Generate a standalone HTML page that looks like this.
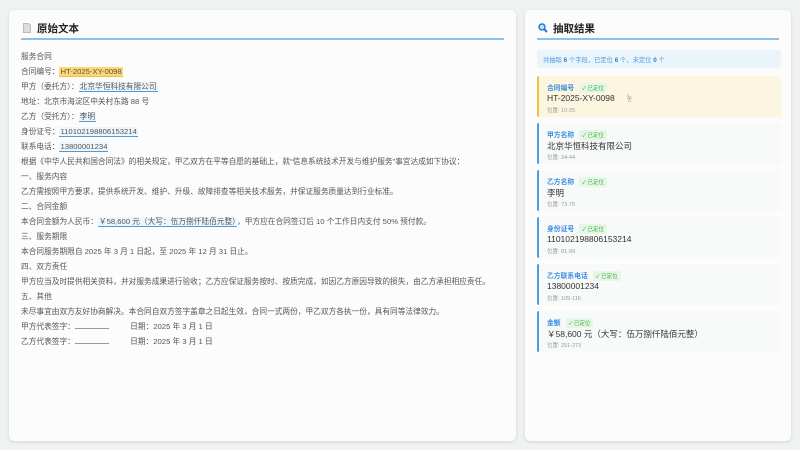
<!DOCTYPE html>
<html><head><meta charset="utf-8"><style>
*{margin:0;padding:0;box-sizing:border-box}
body{width:800px;height:450px;background:#eff2f2;font-family:"Liberation Sans","Noto Sans CJK SC",sans-serif;position:relative;overflow:hidden;color:#444}
.panel{position:absolute;top:10px;height:431px;background:#fcfcfc;border-radius:5px;box-shadow:0 1px 3px rgba(0,0,0,.12)}
#L{left:9px;width:507px}
#R{left:525px;width:266px}
.hd{position:absolute;left:12px;right:12px;top:10px;height:20px;border-bottom:2px solid #8cc0ee;font-weight:bold;font-size:10.5px;color:#222}
.hd span{position:absolute;left:16px;top:1px}
.line{position:absolute;left:12px;font-size:7.7px;color:#555;white-space:nowrap;line-height:10px}
.hl{border-bottom:1.5px solid #f0c040;padding:0 1px;background:#fdd872}
.bl{background:#eef6fd;border-bottom:1.5px solid #4a9be0;padding:0 1px}
.sum{position:absolute;left:12px;right:10px;top:40px;height:18px;background:#eaf5fb;border-radius:3px;font-size:6.3px;color:#4a9be0;padding:5px 6px}
.sum b{color:#2a7acc}
.card{position:absolute;left:12px;width:244px;height:41px;background:#f8fafa;border-left:2.5px solid #4a9be0;border-radius:2px}
.card .t{position:absolute;left:8px;top:6px;font-size:6.8px;font-weight:bold;color:#3a8de0}
.card .ok{display:inline-block;margin-left:5px;background:#e6f6e6;color:#3cb03c;font-weight:normal;font-size:5.5px;padding:1px 3px;border-radius:2px}
.card .v{position:absolute;left:8px;top:17px;font-size:8.5px;color:#333}
.card .p{position:absolute;left:8px;top:30px;font-size:5.5px;color:#999}
</style></head><body>
<div class="panel" id="L">
<div class="hd"><svg style="position:absolute;left:2px;top:3px" width="8" height="10"><path d="M0.5 0.5h5l2 2v7h-7z" fill="#ddd" stroke="#bbb"/></svg><span>原始文本</span></div>
<div class="line" style="top:42px">服务合同</div>
<div class="line" style="top:57px">合同编号：<span class="hl">HT-2025-XY-0098</span></div>
<div class="line" style="top:72px">甲方（委托方）：<span class="bl">北京华恒科技有限公司</span></div>
<div class="line" style="top:87px">地址：北京市海淀区中关村东路 88 号</div>
<div class="line" style="top:102px">乙方（受托方）：<span class="bl">李明</span></div>
<div class="line" style="top:117px">身份证号：<span class="bl">110102198806153214</span></div>
<div class="line" style="top:132px">联系电话：<span class="bl">13800001234</span></div>
<div class="line" style="top:147px">根据《中华人民共和国合同法》的相关规定，甲乙双方在平等自愿的基础上，就“信息系统技术开发与维护服务”事宜达成如下协议：</div>
<div class="line" style="top:162px">一、服务内容</div>
<div class="line" style="top:177px">乙方需按照甲方要求，提供系统开发、维护、升级、故障排查等相关技术服务，并保证服务质量达到行业标准。</div>
<div class="line" style="top:192px">二、合同金额</div>
<div class="line" style="top:207px">本合同金额为人民币：<span class="bl">￥58,600 元（大写：伍万捌仟陆佰元整）</span>，甲方应在合同签订后 10 个工作日内支付 50% 预付款。</div>
<div class="line" style="top:222px">三、服务期限</div>
<div class="line" style="top:237px">本合同服务期限自 2025 年 3 月 1 日起，至 2025 年 12 月 31 日止。</div>
<div class="line" style="top:252px">四、双方责任</div>
<div class="line" style="top:267px">甲方应当及时提供相关资料，并对服务成果进行验收；乙方应保证服务按时、按质完成，如因乙方原因导致的损失，由乙方承担相应责任。</div>
<div class="line" style="top:282px">五、其他</div>
<div class="line" style="top:297px">未尽事宜由双方友好协商解决。本合同自双方签字盖章之日起生效，合同一式两份，甲乙双方各执一份，具有同等法律效力。</div>
<div class="line" style="top:312px">甲方代表签字：<span style="display:inline-block;width:34px;border-bottom:1px solid #999"></span>&nbsp;&nbsp;&nbsp;&nbsp;&nbsp;&nbsp;&nbsp;&nbsp;&nbsp;&nbsp;日期：2025 年 3 月 1 日</div>
<div class="line" style="top:327px">乙方代表签字：<span style="display:inline-block;width:34px;border-bottom:1px solid #999"></span>&nbsp;&nbsp;&nbsp;&nbsp;&nbsp;&nbsp;&nbsp;&nbsp;&nbsp;&nbsp;日期：2025 年 3 月 1 日</div>
</div>
<div class="panel" id="R">
<div class="hd"><svg style="position:absolute;left:1px;top:3px" width="10" height="10"><circle cx="4" cy="4" r="3" fill="#bfe0f5" stroke="#2a7acc" stroke-width="1.5"/><path d="M6 6l3 3" stroke="#2a7acc" stroke-width="2"/></svg><span>抽取结果</span></div>
<div class="sum">共抽取 <b>6</b> 个字段，已定位 <b>6</b> 个，未定位 <b>0</b> 个</div>
<div class="card" style="top:66px;background:#fcf5e0;border-left-color:#f0c040"><div class="t">合同编号<span class="ok">✓ 已定位</span></div><div class="v">HT-2025-XY-0098 <span style="margin-left:8px;color:#888;font-size:8px">☝</span></div><div class="p">位置: 10-25</div></div>
<div class="card" style="top:113px"><div class="t">甲方名称<span class="ok">✓ 已定位</span></div><div class="v">北京华恒科技有限公司</div><div class="p">位置: 34-44</div></div>
<div class="card" style="top:160px"><div class="t">乙方名称<span class="ok">✓ 已定位</span></div><div class="v">李明</div><div class="p">位置: 73-75</div></div>
<div class="card" style="top:207px"><div class="t">身份证号<span class="ok">✓ 已定位</span></div><div class="v">110102198806153214</div><div class="p">位置: 81-99</div></div>
<div class="card" style="top:254px"><div class="t">乙方联系电话<span class="ok">✓ 已定位</span></div><div class="v">13800001234</div><div class="p">位置: 105-116</div></div>
<div class="card" style="top:301px"><div class="t">金额<span class="ok">✓ 已定位</span></div><div class="v">￥58,600 元（大写：伍万捌仟陆佰元整）</div><div class="p">位置: 251-273</div></div>
</div>
</body></html>
